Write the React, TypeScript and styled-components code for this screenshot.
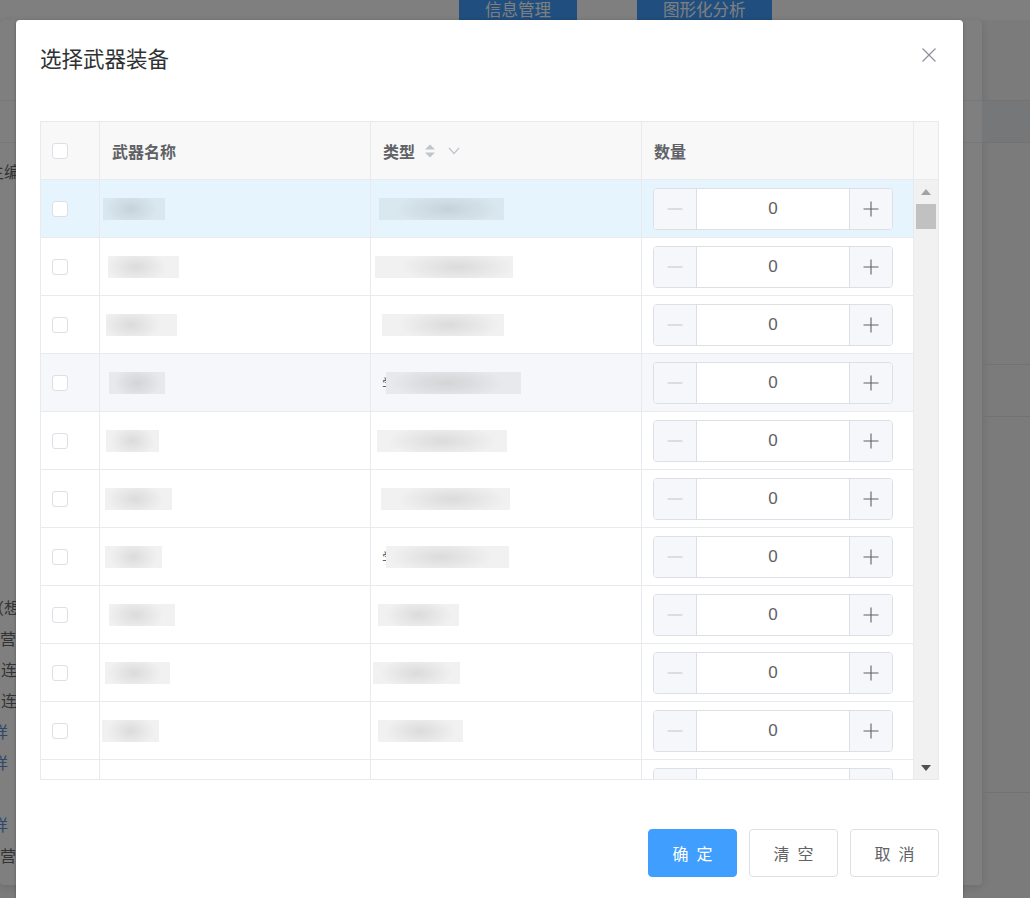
import React from "react";
import styled, { createGlobalStyle } from "styled-components";

const GlobalStyle = createGlobalStyle`
  html, body { margin: 0; padding: 0; overflow: hidden; }
  body { font-family: "Liberation Sans", "Noto Sans CJK SC", sans-serif; background: #fff; }
  * { box-sizing: border-box; }
`;

const CJK = `"Noto Sans CJK SC", "Liberation Sans", sans-serif`;

const Page = styled.div`
  position: relative;
  width: 1030px;
  height: 898px;
  overflow: hidden;
  display: flex;
  flex-direction: column;
  background: #f6f6f6;
`;

const TopBar = styled.div`
  height: 20px;
  flex: none;
  background: #fff;
  display: flex;
  gap: 60px;
  padding-left: 459px;
  overflow: hidden;
`;

const NavButton = styled.div`
  height: 20px;
  padding: 0 26px;
  background: #409eff;
  color: #fff;
  font-family: ${CJK};
  font-size: 16.5px;
  line-height: 18px;
  white-space: nowrap;
`;

const Main = styled.div`
  flex: 1;
  display: flex;
  align-items: flex-start;
`;

const Card = styled.div`
  width: 982px;
  height: 865px;
  flex: none;
  background: #fff;
  border-radius: 4px;
  box-shadow: 0 2px 10px rgba(0, 0, 0, 0.12);
  display: flex;
  flex-direction: column;
  overflow: hidden;
`;

const CardBand = styled.div<{ $h: number }>`
  height: ${(p) => p.$h}px;
  flex: none;
  border-bottom: 1px solid #ebeef5;
`;

const CardLine = styled.div<{ $h: number; $shift: number; $blue?: boolean }>`
  height: ${(p) => p.$h}px;
  line-height: ${(p) => p.$h}px;
  flex: none;
  margin-left: ${(p) => p.$shift}px;
  font-family: ${CJK};
  font-size: 16px;
  color: ${(p) => (p.$blue ? "#5b8fd0" : "#666")};
  white-space: nowrap;
`;

const CardSpacer = styled.div<{ $h: number }>`
  height: ${(p) => p.$h}px;
  flex: none;
`;

const Side = styled.div`
  flex: 1;
  display: flex;
  flex-direction: column;
`;

const SideBlock = styled.div<{ $h: number; $band?: boolean }>`
  height: ${(p) => p.$h}px;
  flex: none;
  border-bottom: 1px solid #e4e4e6;
  background: ${(p) => (p.$band ? "#eceef3" : "transparent")};
`;

const Overlay = styled.div`
  position: absolute;
  inset: 0;
  background: rgba(0, 0, 0, 0.5);
  display: flex;
  align-items: flex-start;
  padding: 20px 0 0 16px;
`;

const Dialog = styled.div`
  position: relative;
  width: 947px;
  flex: none;
  background: #fff;
  border-radius: 4px;
  box-shadow: 0 1px 3px rgba(0, 0, 0, 0.3);
`;

const DialogHeader = styled.div`
  padding: 24px 24px 0;
`;

const Title = styled.div`
  font-family: ${CJK};
  font-size: 21.5px;
  line-height: 28px;
  color: #303133;
`;

const CloseButton = styled.button`
  position: absolute;
  top: 27px;
  right: 26px;
  width: 16px;
  height: 16px;
  padding: 0;
  border: 0;
  background: none;
  display: flex;
  cursor: pointer;
`;

const DialogBody = styled.div`
  padding: 49px 24px 0;
`;

const Table = styled.div`
  width: 899px;
  height: 659px;
  border: 1px solid #e8eaee;
  display: flex;
  flex-direction: column;
`;

const HeadRow = styled.div`
  height: 58px;
  flex: none;
  display: grid;
  grid-template-columns: 59px 271px 271px 272px 24px;
  border-bottom: 1px solid #e8eaee;
  background: #f8f8f9;
`;

const HeadCell = styled.div<{ $last?: boolean }>`
  display: flex;
  align-items: center;
  padding: 0 12px;
  border-right: ${(p) => (p.$last ? "0" : "1px solid #e8eaee")};
  font-family: ${CJK};
  font-size: 16px;
  font-weight: 700;
  color: #606266;
  white-space: nowrap;
`;

const CheckCell = styled.div`
  display: flex;
  align-items: center;
  padding-left: 11px;
  border-right: 1px solid #e8eaee;
`;

const Checkbox = styled.span`
  display: block;
  width: 16px;
  height: 16px;
  border: 1px solid #dcdfe6;
  border-radius: 3px;
  background: #fff;
`;

const SortIcon = styled.svg`
  margin-left: 9px;
  flex: none;
`;

const FilterIcon = styled.svg`
  margin-left: 12px;
  flex: none;
`;

const TableBody = styled.div`
  flex: 1;
  display: flex;
  min-height: 0;
`;

const Rows = styled.div`
  width: 873px;
  flex: none;
  overflow: hidden;
`;

const Row = styled.div<{ $bg: string }>`
  height: 58px;
  display: grid;
  grid-template-columns: 59px 271px 271px 272px;
  border-bottom: 1px solid #e8eaee;
  background: ${(p) => p.$bg};
`;

const Cell = styled.div`
  display: flex;
  align-items: center;
  border-right: 1px solid #e8eaee;
  overflow: hidden;
`;

const QtyCell = styled(Cell)`
  padding-left: 11px;
`;

const Blur = styled.span<{ $w: number; $x: number; $hot: number }>`
  display: block;
  flex: none;
  width: ${(p) => p.$w}px;
  height: 22px;
  margin-left: ${(p) => p.$x}px;
  background: radial-gradient(
      ellipse 42% 75% at ${(p) => p.$hot}% 50%,
      rgba(0, 0, 0, 0.09),
      rgba(0, 0, 0, 0) 100%
    ),
    rgba(0, 0, 0, 0.055);
  filter: blur(0.6px);
`;

const Fragment = styled.span`
  display: block;
  flex: none;
  width: 4px;
  margin-left: 11px;
  overflow: hidden;
  font-family: ${CJK};
  font-size: 14px;
  line-height: 22px;
  color: #606266;
`;

const InputNumber = styled.div`
  width: 240px;
  height: 42px;
  display: flex;
  border: 1px solid #dcdfe6;
  border-radius: 4px;
  background: #fff;
  overflow: hidden;
`;

const StepButton = styled.span<{ $side: "left" | "right" }>`
  width: 43px;
  flex: none;
  display: flex;
  align-items: center;
  justify-content: center;
  background: #f5f7fa;
  border-left: ${(p) => (p.$side === "right" ? "1px solid #dcdfe6" : "0")};
  border-right: ${(p) => (p.$side === "left" ? "1px solid #dcdfe6" : "0")};
`;

const Value = styled.span`
  flex: 1;
  display: flex;
  align-items: center;
  justify-content: center;
  font-family: "Liberation Sans", sans-serif;
  font-size: 17px;
  color: #606266;
`;

const ScrollTrack = styled.div`
  width: 24px;
  flex: none;
  background: #f1f1f1;
  display: flex;
  flex-direction: column;
  align-items: center;
`;

const ArrowUp = styled.span`
  width: 0;
  height: 0;
  margin-top: 9px;
  border-left: 5.5px solid transparent;
  border-right: 5.5px solid transparent;
  border-bottom: 6px solid #a3a3a3;
`;

const Thumb = styled.span`
  width: 20px;
  height: 25px;
  margin-top: 9px;
  background: #c1c1c1;
`;

const ArrowDown = styled.span`
  width: 0;
  height: 0;
  margin-top: auto;
  margin-bottom: 8px;
  border-left: 5.5px solid transparent;
  border-right: 5.5px solid transparent;
  border-top: 6px solid #505050;
`;

const Footer = styled.div`
  display: flex;
  justify-content: flex-end;
  gap: 12px;
  padding: 49px 24px 24px;
`;

const FooterButton = styled.button<{ $primary?: boolean }>`
  width: 89px;
  height: 48px;
  padding: 0 0 0 8px;
  border-radius: 4px;
  border: 1px solid ${(p) => (p.$primary ? "#409eff" : "#dcdfe6")};
  background: ${(p) => (p.$primary ? "#409eff" : "#fff")};
  color: ${(p) => (p.$primary ? "#fff" : "#606266")};
  font-family: ${CJK};
  font-size: 16px;
  letter-spacing: 8px;
  cursor: pointer;
`;

type RowData = {
  bg: string;
  name?: [number, number, number];
  type?: [number, number, number];
  frag?: boolean;
};

const rows: RowData[] = [
  { bg: "#e6f5fd", name: [3, 62, 45], type: [8, 125, 55] },
  { bg: "#fff", name: [8, 71, 40], type: [4, 138, 60] },
  { bg: "#fff", name: [6, 71, 35], type: [11, 122, 55] },
  { bg: "#f5f7fa", name: [9, 56, 50], type: [0, 135, 45], frag: true },
  { bg: "#fff", name: [6, 53, 50], type: [6, 130, 50] },
  { bg: "#fff", name: [5, 67, 45], type: [10, 129, 55] },
  { bg: "#fff", name: [5, 57, 50], type: [0, 123, 45], frag: true },
  { bg: "#fff", name: [9, 66, 40], type: [7, 81, 50] },
  { bg: "#fff", name: [5, 65, 45], type: [2, 87, 50] },
  { bg: "#fff", name: [2, 57, 50], type: [7, 85, 50] },
  { bg: "#fff" },
];

const leftLines: { t: string; shift: number; blue?: boolean }[] = [
  { t: "（想", shift: -12 },
  { t: "营", shift: 0 },
  { t: "连", shift: 1 },
  { t: "连", shift: 1 },
  { t: "详", shift: -8, blue: true },
  { t: "详", shift: -8, blue: true },
  { t: "", shift: 0 },
  { t: "详", shift: -8, blue: true },
  { t: "营", shift: 0 },
];

const MinusIcon = () => (
  <svg width="16" height="16" viewBox="0 0 16 16">
    <line x1="0.5" y1="8" x2="15.5" y2="8" stroke="#c0c4cc" strokeWidth="1.1" />
  </svg>
);

const PlusIcon = () => (
  <svg width="16" height="16" viewBox="0 0 16 16">
    <line x1="0.5" y1="8" x2="15.5" y2="8" stroke="#606266" strokeWidth="1.1" />
    <line x1="8" y1="0.5" x2="8" y2="15.5" stroke="#606266" strokeWidth="1.1" />
  </svg>
);

export default function App() {
  return (
    <Page>
      <GlobalStyle />
      <TopBar>
        <NavButton>信息管理</NavButton>
        <NavButton>图形化分析</NavButton>
      </TopBar>
      <Main>
        <Card>
          <CardBand $h={81} />
          <CardBand $h={42} />
          <CardLine $h={56} $shift={-12}>
            主编
          </CardLine>
          <CardSpacer $h={393} />
          {leftLines.map((l, i) => (
            <CardLine key={i} $h={31} $shift={l.shift} $blue={l.blue}>
              {l.t}
            </CardLine>
          ))}
        </Card>
        <Side>
          <SideBlock $h={81} />
          <SideBlock $h={42} $band />
          <SideBlock $h={222} />
          <SideBlock $h={52} />
          <SideBlock $h={376} />
        </Side>
      </Main>

      <Overlay>
        <Dialog>
          <DialogHeader>
            <Title>选择武器装备</Title>
          </DialogHeader>
          <CloseButton aria-label="关闭">
            <svg width="16" height="16" viewBox="0 0 16 16">
              <line x1="1.5" y1="1.5" x2="14.5" y2="14.5" stroke="#909399" strokeWidth="1.3" />
              <line x1="14.5" y1="1.5" x2="1.5" y2="14.5" stroke="#909399" strokeWidth="1.3" />
            </svg>
          </CloseButton>
          <DialogBody>
            <Table>
              <HeadRow>
                <CheckCell>
                  <Checkbox />
                </CheckCell>
                <HeadCell>武器名称</HeadCell>
                <HeadCell>
                  类型
                  <SortIcon width="12" height="16" viewBox="0 0 12 16">
                    <polygon points="6,1.5 11,6.5 1,6.5" fill="#c0c4cc" />
                    <polygon points="1,9.5 11,9.5 6,14.5" fill="#c0c4cc" />
                  </SortIcon>
                  <FilterIcon width="12" height="8" viewBox="0 0 12 8">
                    <polyline points="1,1 6,6.5 11,1" fill="none" stroke="#c0c4cc" strokeWidth="1.2" />
                  </FilterIcon>
                </HeadCell>
                <HeadCell>数量</HeadCell>
                <HeadCell $last />
              </HeadRow>
              <TableBody>
                <Rows>
                  {rows.map((r, i) => (
                    <Row key={i} $bg={r.bg}>
                      <CheckCell>
                        <Checkbox />
                      </CheckCell>
                      <Cell>
                        {r.name && <Blur $x={r.name[0]} $w={r.name[1]} $hot={r.name[2]} />}
                      </Cell>
                      <Cell>
                        {r.frag && <Fragment>学</Fragment>}
                        {r.type && <Blur $x={r.type[0]} $w={r.type[1]} $hot={r.type[2]} />}
                      </Cell>
                      <QtyCell>
                        <InputNumber>
                          <StepButton $side="left">
                            <MinusIcon />
                          </StepButton>
                          <Value>0</Value>
                          <StepButton $side="right">
                            <PlusIcon />
                          </StepButton>
                        </InputNumber>
                      </QtyCell>
                    </Row>
                  ))}
                </Rows>
                <ScrollTrack>
                  <ArrowUp />
                  <Thumb />
                  <ArrowDown />
                </ScrollTrack>
              </TableBody>
            </Table>
          </DialogBody>
          <Footer>
            <FooterButton $primary>确定</FooterButton>
            <FooterButton>清空</FooterButton>
            <FooterButton>取消</FooterButton>
          </Footer>
        </Dialog>
      </Overlay>
    </Page>
  );
}
